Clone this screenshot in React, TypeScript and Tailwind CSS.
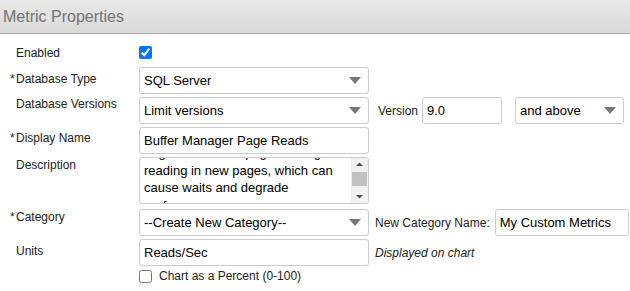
import { ReactNode } from "react";

const font = { fontFamily: '"Liberation Sans", Arial, sans-serif' };

const Caret = () => (
  <svg width="12" height="7" viewBox="0 0 12 7" className="shrink-0">
    <path d="M0 0 L12 0 L6 7 Z" fill="#777" />
  </svg>
);

const FakeSelect = ({ value, className }: { value: string; className: string }) => (
  <div
    className={`flex h-[27px] shrink-0 items-center justify-between whitespace-nowrap rounded-[3px] border border-[#cccccc] bg-white pl-[4px] pr-[7px] text-[13px] text-black ${className}`}
  >
    <span>{value}</span>
    <Caret />
  </div>
);

const FakeInput = ({ value, className }: { value: string; className: string }) => (
  <div
    className={`flex h-[27px] shrink-0 items-center whitespace-nowrap rounded-[3px] border border-[#cccccc] bg-white px-[4px] text-[13px] text-black ${className}`}
  >
    {value}
  </div>
);

const Row = ({
  label,
  required,
  children,
  className = "",
  labelClass = "",
}: {
  label: string;
  required?: boolean;
  children: ReactNode;
  className?: string;
  labelClass?: string;
}) => (
  <div className={`flex items-start whitespace-nowrap ${className}`}>
    <div className={`w-[139px] shrink-0 pl-[10px] text-[12px] text-[#222] ${labelClass}`}>
      <span className="inline-block w-[6px]">{required ? "*" : ""}</span>
      {label}
    </div>
    {children}
  </div>
);

export default function App() {
  return (
    <div className="h-[291px] w-[630px] overflow-hidden bg-white" style={font}>
      <div className="flex h-[34px] items-center border-b border-[#acacac] bg-gradient-to-b from-[#e9e9e9] to-[#d9d9d9] pl-[3px] text-[16px] text-[#737373]">
        Metric Properties
      </div>

      <div className="flex h-[33px] items-center pt-[4px]">
        <div className="w-[139px] shrink-0 pl-[16px] text-[12px] text-[#222]">Enabled</div>
        <input type="checkbox" defaultChecked className="m-0 h-[13px] w-[13px] accent-[#0075ff]" />
      </div>

      <div className="flex flex-col gap-[3px]">
        <Row label="Database Type" required labelClass="pt-[3px]">
          <FakeSelect value="SQL Server" className="w-[230px]" />
        </Row>
        <Row label="Database Versions" labelClass="mt-[-2px]">
          <FakeSelect value="Limit versions" className="w-[230px]" />
          <div className="flex h-[27px] shrink-0 items-center pl-[9px] text-[12px] text-[#222]">
            <span className="mr-[4px]">Version</span>
            <FakeInput value="9.0" className="w-[80px]" />
            <FakeSelect value="and above" className="ml-[13px] w-[109px]" />
          </div>
        </Row>
        <Row label="Display Name" required labelClass="pt-[2px]">
          <FakeInput value="Buffer Manager Page Reads" className="w-[230px]" />
        </Row>
        <Row label="Description" labelClass="mt-[-1px]">
          <div className="relative h-[47px] w-[230px] shrink-0 overflow-hidden rounded-[3px] border border-[#cccccc] bg-white">
            <div className="absolute left-[4px] top-[-14px] w-[205px] whitespace-nowrap text-[13px] leading-[17.5px] text-black">
              <div>large numbers of page reads go</div>
              <div>reading in new pages, which can</div>
              <div>cause waits and degrade</div>
              <div>performance</div>
            </div>
            <div className="absolute right-0 top-0 flex h-full w-[17px] flex-col items-center bg-[#f1f1f1]">
              <svg width="17" height="12" viewBox="0 0 17 12">
                <path d="M5 8 L12 8 L8.5 4.5 Z" fill="#505050" />
              </svg>
              <div className="mt-[2px] h-[14px] w-[15px] bg-[#c1c1c1]" />
              <div className="flex-1" />
              <svg width="17" height="12" viewBox="0 0 17 12">
                <path d="M5 4 L12 4 L8.5 7.5 Z" fill="#505050" />
              </svg>
            </div>
          </div>
        </Row>
        <Row label="Category" required className="mt-[2px]" labelClass="mt-[-1px]">
          <FakeSelect value="--Create New Category--" className="w-[230px]" />
          <div className="flex h-[27px] shrink-0 items-center pl-[6px] text-[12px] text-[#222]">
            <span className="mr-[5px]">New Category Name:</span>
            <FakeInput value="My Custom Metrics" className="w-[134px]" />
            <div className="ml-[2px] h-[27px] w-[10px] shrink-0 rounded-l-[3px] border border-[#cccccc]" />
          </div>
        </Row>
        <Row label="Units" labelClass="pt-[3px]">
          <FakeInput value="Reads/Sec" className="w-[230px]" />
          <div className="flex h-[27px] shrink-0 items-center pl-[6px] text-[12px] italic text-[#222]">
            Displayed on chart
          </div>
        </Row>
      </div>

      <div className="flex items-center pl-[139px] pt-[1px]">
        <input type="checkbox" className="m-0 h-[13px] w-[13px]" />
        <span className="ml-[7px] text-[12px] text-[#222]">Chart as a Percent (0-100)</span>
      </div>
    </div>
  );
}
